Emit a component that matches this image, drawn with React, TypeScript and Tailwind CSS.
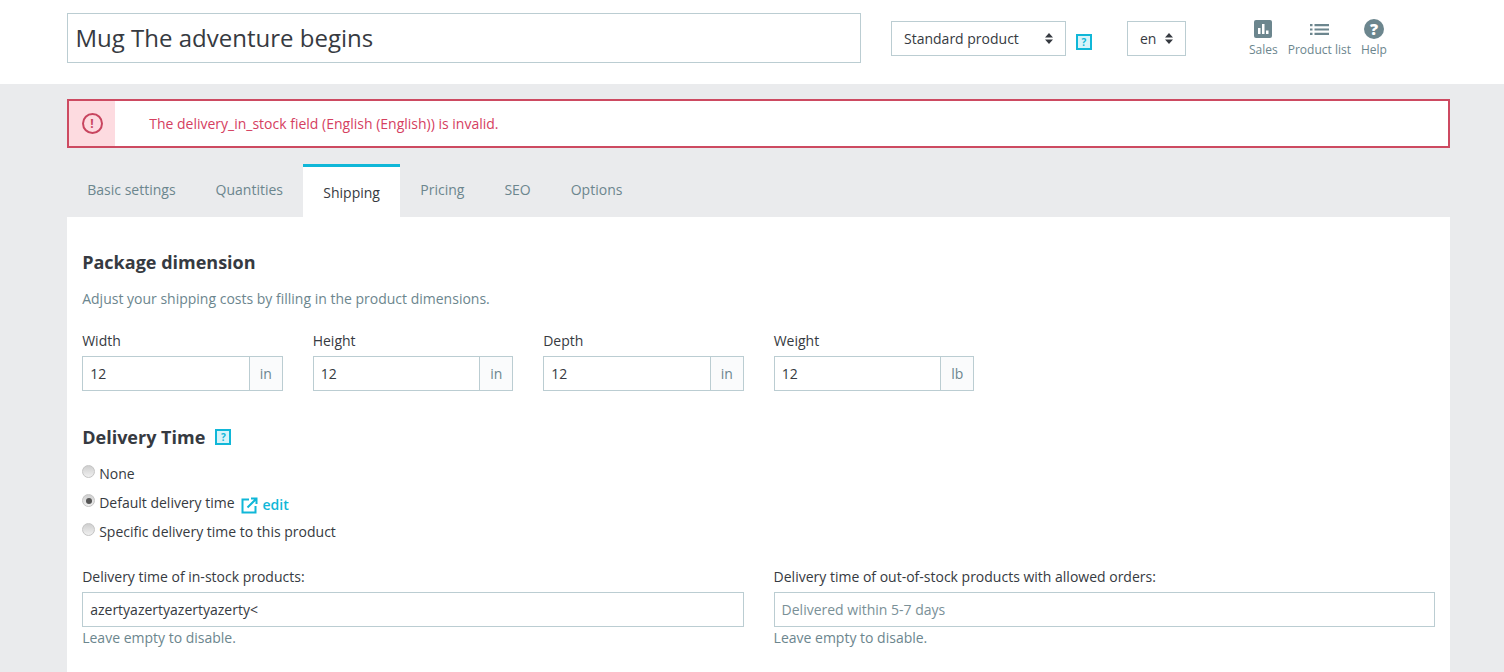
function HelpBox() {
    return (
        <span className="flex h-4 w-4 items-center justify-center border-2 border-[#10b7d8] bg-[#d9f3f9] text-[10px] font-bold leading-none text-[#10b7d8]">
            ?
        </span>
    )
}

function Arrows() {
    return (
        <svg width="8" height="11" viewBox="0 0 8 11" className="fill-[#363a41]">
            <path d="M4 0 8 4.5H0zM4 11 0 6.5h8z" />
        </svg>
    )
}

function FakeSelect({ label, className }: { label: string; className: string }) {
    return (
        <div className={`flex h-[35px] items-center justify-between border border-[#bbcdd2] text-sm text-[#363a41] ${className}`}>
            <span>{label}</span>
            <Arrows />
        </div>
    )
}

function HeaderLink({ label, icon }: { label: string; icon: React.ReactNode }) {
    return (
        <div className="flex flex-col items-center text-xs text-[#6c868e]">
            <div className="flex h-[22px] items-center justify-center">{icon}</div>
            <span className="mt-[2px] leading-[16px]">{label}</span>
        </div>
    )
}

function Dimension({ label, unit }: { label: string; unit: string }) {
    return (
        <div className="mr-[30px] w-[200.5px]">
            <div className="mb-[6px] text-sm leading-[19px] text-[#363a41]">{label}</div>
            <div className="flex h-[35px] border border-[#bbcdd2] text-sm">
                <div className="flex flex-1 items-center pl-[7px] text-[#363a41]">12</div>
                <div className="flex w-[33px] items-center justify-center border-l border-[#bbcdd2] bg-[#fafbfc] text-[#6c868e]">{unit}</div>
            </div>
        </div>
    )
}

function Radio({ checked }: { checked?: boolean }) {
    return (
        <span className="-mt-[4px] flex h-[13px] w-[13px] items-center justify-center rounded-full border border-[#c4c4c4] bg-gradient-to-b from-[#cfcfcf] to-[#f0f0f0]">
            {checked && <span className="h-[6px] w-[6px] rounded-full bg-[#555555]" />}
        </span>
    )
}

function DeliveryField({ label, value, placeholder }: { label: string; value?: string; placeholder?: string }) {
    return (
        <div className="w-[661.5px]">
            <div className="mb-[6px] text-sm leading-[19px] text-[#363a41]">{label}</div>
            <div className={`flex h-[35px] items-center border border-[#bbcdd2] pl-[7px] text-sm ${value ? 'text-[#363a41]' : 'text-[#7a9097]'}`}>
                {value ?? placeholder}
            </div>
            <div className="text-sm leading-[21px] text-[#6c868e]">Leave empty to disable.</div>
        </div>
    )
}

const tabs = ['Basic settings', 'Quantities', 'Shipping', 'Pricing', 'SEO', 'Options']

export default function App() {
    return (
        <div className="h-[672px] overflow-hidden bg-[#eaebed] font-['Open_Sans',sans-serif]">
            {/* Top bar */}
            <header className="flex h-[84px] items-start bg-white pl-[67px]">
                <div className="mt-[13px] flex h-[50px] w-[794px] items-center border border-[#bbcdd2] pl-[7.5px] text-2xl text-[#363a41]">
                    Mug The adventure begins
                </div>
                <FakeSelect label="Standard product" className="ml-[30px] mt-[21px] w-[175px] pl-3 pr-3" />
                <div className="ml-[10px] mt-[34px]">
                    <HelpBox />
                </div>
                <FakeSelect label="en" className="ml-[35px] mt-[21px] w-[59px] pl-3 pr-3" />
                <div className="ml-[63px] mt-[18px] flex gap-[10px]">
                    <HeaderLink
                        label="Sales"
                        icon={
                            <svg width="18" height="18" viewBox="0 0 18 18">
                                <rect width="18" height="18" rx="2" className="fill-[#6c868e]" />
                                <path d="M4 8h2.5v6H4zM8 4h2.5v10H8zM12 10.500h2.500V14H12z" className="fill-white" />
                            </svg>
                        }
                    />
                    <HeaderLink
                        label="Product list"
                        icon={
                            <svg width="19" height="11" viewBox="0 0 19 11" className="fill-[#6c868e]">
                                <path d="M0 0h2.500v2.200H0zM4.500 0H19v2.200H4.500zM0 4.400h2.500v2.200H0zM4.500 4.400H19v2.200H4.500zM0 8.800h2.500V11H0zM4.500 8.800H19V11H4.500z" />
                            </svg>
                        }
                    />
                    <HeaderLink
                        label="Help"
                        icon={
                            <span className="flex h-[20px] w-[20px] items-center justify-center rounded-full bg-[#6c868e] text-base font-extrabold leading-none text-white">
                                ?
                            </span>
                        }
                    />
                </div>
            </header>

            <main className="pl-[67px] pr-[54px] pt-[15px]">
                {/* Error alert */}
                <div className="flex h-[49px] border-2 border-[#cd4a61] bg-white">
                    <div className="flex w-[46px] items-center justify-center bg-[#fddbe0]">
                        <span className="flex h-[21px] w-[21px] items-center justify-center rounded-full border-2 border-[#c8455f] text-xs font-bold leading-none text-[#c8455f]">
                            !
                        </span>
                    </div>
                    <div className="flex items-center pl-[34.2px] text-sm text-[#d5405f]">
                        The delivery_in_stock field (English (English)) is invalid.
                    </div>
                </div>

                {/* Tabs */}
                <nav className="mt-[16px] flex h-[53px] items-stretch pl-[0.3px]">
                    {tabs.map(tab =>
                        tab === 'Shipping' ? (
                            <div key={tab} className="flex items-center border-t-[3px] border-[#10b7d8] bg-white px-[20.300px] pt-[1px] text-sm text-[#363a41]">
                                {tab}
                            </div>
                        ) : (
                            <div key={tab} className="flex items-center px-[20px] pb-[2px] text-sm text-[#6c868e]">
                                {tab}
                            </div>
                        )
                    )}
                </nav>

                {/* Shipping panel */}
                <section className="h-[460px] bg-white pl-[15.2px] pr-[15px] pt-[31px]">
                    <h2 className="text-lg font-bold leading-[28px] text-[#363a41]">Package dimension</h2>
                    <p className="mt-[13px] text-sm leading-[20px] text-[#6c868e]">Adjust your shipping costs by filling in the product dimensions.</p>

                    <div className="mt-[22px] flex">
                        <Dimension label="Width" unit="in" />
                        <Dimension label="Height" unit="in" />
                        <Dimension label="Depth" unit="in" />
                        <Dimension label="Weight" unit="lb" />
                    </div>

                    <div className="mt-[32px] flex items-center gap-[10px]">
                        <h2 className="text-lg font-bold leading-[28px] text-[#363a41]">Delivery Time</h2>
                        <HelpBox />
                    </div>

                    <div className="mt-[8px] text-sm text-[#363a41]">
                        <div className="flex h-[29px] items-center gap-[4px]">
                            <Radio />
                            <span>None</span>
                        </div>
                        <div className="flex h-[29px] items-center gap-[4px]">
                            <Radio checked />
                            <span>Default delivery time</span>
                            <span className="ml-[2px] mt-[5px] flex items-center gap-[5px] font-semibold text-[#10b7d8]">
                                <svg width="17" height="17" viewBox="0 0 17 17" fill="none" stroke="currentColor" strokeWidth="2">
                                    <path d="M8 2.500H1.500v13h13V9" />
                                    <path d="M6.500 10.500 15 2M10 1.500h5.500V7" />
                                </svg>
                                edit
                            </span>
                        </div>
                        <div className="flex h-[29px] items-center gap-[4px]">
                            <Radio />
                            <span>Specific delivery time to this product</span>
                        </div>
                    </div>

                    <div className="mt-[21px] flex gap-[30px]">
                        <DeliveryField label="Delivery time of in-stock products:" value="azertyazertyazertyazerty<" />
                        <DeliveryField label="Delivery time of out-of-stock products with allowed orders:" placeholder="Delivered within 5-7 days" />
                    </div>
                </section>
            </main>
        </div>
    )
}
